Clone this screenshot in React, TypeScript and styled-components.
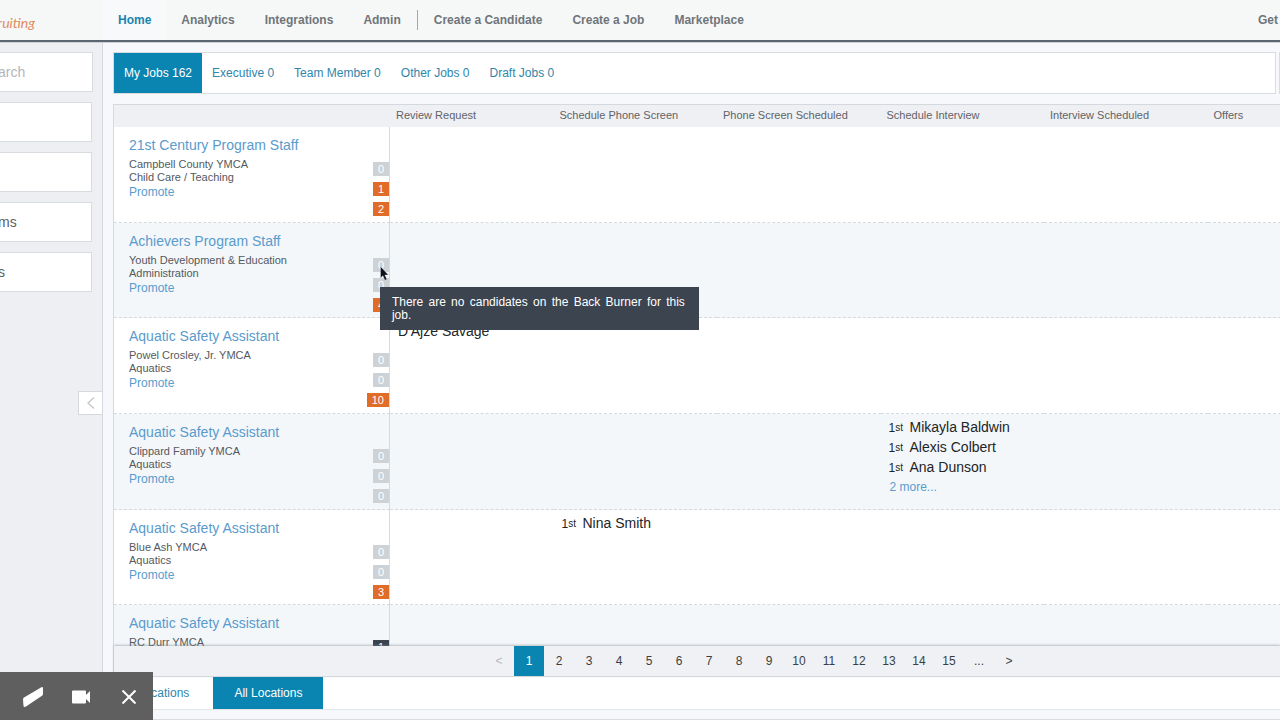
import React from "react";
import styled, { createGlobalStyle, css } from "styled-components";

const GlobalStyle = createGlobalStyle`
  *, *::before, *::after { box-sizing: border-box; }
  body {
    margin: 0;
    overflow: hidden;
    font-family: "Liberation Sans", Arial, sans-serif;
    font-size: 12px;
    color: #55595e;
    background: #f6f8fb;
  }
  a { text-decoration: none; color: inherit; }
  button { font: inherit; border: 0; padding: 0; cursor: pointer; }
`;

const Page = styled.div`
  display: flex;
  flex-direction: column;
  height: 100vh;
`;

const Header = styled.header`
  display: flex;
  flex: none;
  height: 42px;
  background: #f6f8f8;
  border-bottom: 2px solid #5c6670;
  box-shadow: 0 1px 0 #c9d1dc;
  position: relative;
`;

const Logo = styled.a`
  display: flex;
  justify-content: flex-end;
  width: 35px;
  margin-right: 68px;
  padding-top: 13px;
  overflow: hidden;
  font: italic 14px/20px Lato, cursive;
  color: #e08a5b;
`;

const Nav = styled.nav`
  display: flex;
  flex: 1;
  align-items: center;
`;

const NavLink = styled.a<{ $active?: boolean }>`
  display: flex;
  align-items: center;
  height: 40px;
  padding: 0 15px;
  font-weight: bold;
  color: ${(p) => (p.$active ? "#1a84ae" : "#70757a")};
  background: ${(p) => (p.$active ? "#f8f9fa" : "transparent")};
`;

const Divider = styled.span`
  width: 1px;
  height: 20px;
  margin: 0 1px;
  background: #a3a7aa;
`;

const HelpLink = styled.a`
  width: 22px;
  overflow: hidden;
  font-weight: bold;
  line-height: 40px;
  color: #70757a;
`;

const Body = styled.div`
  display: flex;
  flex: 1;
  min-height: 0;
`;

const Sidebar = styled.aside`
  display: flex;
  flex-direction: column;
  flex: none;
  gap: 10px;
  width: 103px;
  padding: 10px 0 0;
  overflow: hidden;
  background: #eeeff3;
  border-right: 1px solid #d3d8de;
`;

const sideBox = css`
  height: 40px;
  margin-right: 10px;
  background: #fff;
  border: 1px solid #d8dbdf;
  border-left: 0;
  font-size: 14px;
  text-indent: -2px;
`;

const SearchInput = styled.input`
  ${sideBox}
  width: 93px;
  flex: none;
  padding: 0;
  font-family: inherit;
  &::placeholder { color: #b4b6b8; opacity: 1; }
`;

const SideLink = styled.a`
  ${sideBox}
  display: flex;
  align-items: center;
  color: #5b5f63;
`;

const Collapse = styled.button`
  display: flex;
  align-items: center;
  justify-content: center;
  align-self: flex-end;
  width: 24px;
  height: 24px;
  margin-top: 89px;
  background: #fff;
  border: 1px solid #d5d8dc;
  border-right: 0;
`;

const Main = styled.main`
  display: flex;
  flex-direction: column;
  flex: 1;
  min-width: 0;
  padding: 10px 0 9px 10px;
  border-bottom: 1px solid #d9dce0;
`;

const TopBar = styled.div`
  display: flex;
  flex: none;
  gap: 3px;
  margin-bottom: 10px;
`;

const TabBar = styled.nav`
  display: flex;
  flex: 1;
  height: 42px;
  background: #fff;
  border: 1px solid #dadddf;
`;

const SideBox = styled.div`
  width: 1px;
  background: #dadddf;
`;

const Tab = styled.a<{ $active?: boolean; $wide?: boolean }>`
  display: flex;
  align-items: center;
  padding: 0 ${(p) => (p.$wide ? 21 : 10)}px;
  color: ${(p) => (p.$active ? "#fff" : "#2f86ab")};
  background: ${(p) => (p.$active ? "#0a84b0" : "transparent")};
`;

const Panel = styled.section`
  display: flex;
  flex-direction: column;
  flex: 1;
  min-height: 0;
  border: 1px solid #d5d9dd;
  border-right: 0;
  border-bottom: 0;
  background: #eff1f4;
`;

const Scroller = styled.div`
  flex: 1;
  min-height: 0;
  overflow: hidden;
`;

const Table = styled.table`
  min-width: 1257px;
  width: 100%;
  table-layout: fixed;
  border-spacing: 0;
`;

const HeadCell = styled.th<{ $first?: boolean }>`
  width: ${(p) => (p.$first ? "276px" : "auto")};
  height: 22px;
  padding: 0 0 2px 6px;
  background: #eff0f4;
  font-size: 11px;
  font-weight: normal;
  line-height: 13px;
  text-align: left;
  color: #5f6368;
`;

const StageCell = styled.td`
  height: 96px;
  padding: 3px 0 0 8px;
  vertical-align: top;
  border-bottom: 1px dashed #d6dadc;
`;

const Row = styled.tr`
  background: #fff;
  &:nth-child(even) { background: #f3f7fa; }
  &:nth-child(3n + 2) > td { height: 95px; }
`;

const JobCell = styled(StageCell)`
  padding: 0;
  border-right: 1px solid #d5dade;
`;

const Job = styled.div`
  display: flex;
  justify-content: space-between;
  padding: 8px 0 0 15px;
`;

const JobInfo = styled.div`
  display: flex;
  flex-direction: column;
  align-items: flex-start;
`;

const JobTitle = styled.a`
  margin-bottom: 3px;
  font-size: 14px;
  line-height: 20px;
  color: #5a9bcd;
`;

const JobDetail = styled.span`
  font-size: 11px;
  line-height: 13px;
`;

const Promote = styled.a`
  line-height: 16px;
  color: #5a9bcd;
`;

const Counts = styled.div`
  display: flex;
  flex-direction: column;
  align-items: flex-end;
  gap: 6px;
  padding-top: 27px;
`;

const CountSlot = styled.div`
  display: flex;
  position: relative;
`;

type Tone = "none" | "hot" | "dark";
const toneColor: Record<Tone, string> = { none: "#ccd2d6", hot: "#e06c28", dark: "#3b434f" };

const Count = styled.button<{ $tone: Tone }>`
  height: 14px;
  padding: 0 5px;
  font-size: 11px;
  line-height: 13px;
  color: #fff;
  background: ${(p) => toneColor[p.$tone]};
`;

const Tooltip = styled.div`
  position: absolute;
  z-index: 2;
  top: 29px;
  left: 7px;
  width: 319px;
  padding: 9px 14px 8px 12px;
  background: #3b444f;
  color: #fff;
  line-height: 13px;
  text-align: justify;
`;

const Pointer = styled.svg`
  position: absolute;
  z-index: 3;
  top: 8px;
  left: 7px;
`;

const Candidate = styled.a`
  display: flex;
  align-items: baseline;
  height: 20px;
  font-size: 14px;
  line-height: 20px;
  color: #222528;
`;

const Rank = styled.span`
  width: 21px;
  font-size: 12px;
  small { font-size: 10px; vertical-align: 1px; line-height: 10px; }
`;

const More = styled.a`
  padding-left: 1px;
  line-height: 20px;
  color: #5a9bcd;
`;

const Pager = styled.nav`
  display: flex;
  flex: none;
  height: 31px;
  padding-left: 370px;
  background: #eff1f4;
  border-bottom: 1px solid #d3d8dd;
  box-shadow: 0 -1px 2px rgba(120, 130, 140, 0.5);
  position: relative;
`;

const PageButton = styled.button<{ $active?: boolean }>`
  width: 30px;
  color: ${(p) => (p.$active ? "#fff" : "#3b3f43")};
  background: ${(p) => (p.$active ? "#0a84b0" : "transparent")};
  &:disabled { color: #b5b9bd; }
`;

const Locations = styled.nav`
  display: flex;
  flex: none;
  gap: 3px;
  height: 33px;
  padding-left: 3px;
  background: #fff;
  border-left: 1px solid #d5d9dd;
  border-bottom: 1px solid #e2e5e9;
`;

const Recorder = styled.div`
  position: fixed;
  z-index: 5;
  left: 0;
  bottom: 0;
  display: flex;
  align-items: center;
  gap: 24px;
  height: 48px;
  padding: 2px 12px 0 21px;
  background: #5f5f5f;
`;

const ToolButton = styled.button`
  display: flex;
  width: 24px;
  height: 24px;
  background: none;
`;

const stages = [
  "Review Request",
  "Schedule Phone Screen",
  "Phone Screen Scheduled",
  "Schedule Interview",
  "Interview Scheduled",
  "Offers",
];

type JobRow = {
  title: string;
  place: string;
  dept: string;
  counts: [number, Tone][];
  tip?: { at: number; text: string };
  stage?: number;
  people?: { rank?: boolean; name: string }[];
  more?: string;
};

const jobs: JobRow[] = [
  {
    title: "21st Century Program Staff",
    place: "Campbell County YMCA",
    dept: "Child Care / Teaching",
    counts: [[0, "none"], [1, "hot"], [2, "hot"]],
  },
  {
    title: "Achievers Program Staff",
    place: "Youth Development & Education",
    dept: "Administration",
    counts: [[0, "none"], [0, "none"], [4, "hot"]],
    tip: { at: 0, text: "There are no candidates on the Back Burner for this job." },
  },
  {
    title: "Aquatic Safety Assistant",
    place: "Powel Crosley, Jr. YMCA",
    dept: "Aquatics",
    counts: [[0, "none"], [0, "none"], [10, "hot"]],
    stage: 0,
    people: [{ name: "D'Ajze Savage" }],
  },
  {
    title: "Aquatic Safety Assistant",
    place: "Clippard Family YMCA",
    dept: "Aquatics",
    counts: [[0, "none"], [0, "none"], [0, "none"]],
    stage: 3,
    people: [
      { rank: true, name: "Mikayla Baldwin" },
      { rank: true, name: "Alexis Colbert" },
      { rank: true, name: "Ana Dunson" },
    ],
    more: "2 more...",
  },
  {
    title: "Aquatic Safety Assistant",
    place: "Blue Ash YMCA",
    dept: "Aquatics",
    counts: [[0, "none"], [0, "none"], [3, "hot"]],
    stage: 1,
    people: [{ rank: true, name: "Nina Smith" }],
  },
  {
    title: "Aquatic Safety Assistant",
    place: "RC Durr YMCA",
    dept: "",
    counts: [[1, "dark"]],
  },
];

const pages = Array.from({ length: 15 }, (_, i) => String(i + 1));

function JobTableRow({ job }: { job: JobRow }) {
  return (
    <Row>
      <JobCell>
        <Job>
          <JobInfo>
            <JobTitle href="#">{job.title}</JobTitle>
            <JobDetail>{job.place}</JobDetail>
            {job.dept && <JobDetail>{job.dept}</JobDetail>}
            {job.dept && <Promote href="#">Promote</Promote>}
          </JobInfo>
          <Counts>
            {job.counts.map(([n, tone], i) => (
              <CountSlot key={i}>
                <Count $tone={tone}>{n}</Count>
                {job.tip?.at === i && (
                  <>
                    <Pointer width="10" height="15" viewBox="0 0 10 15" aria-hidden="true">
                      <path d="M.5 .5V12l2.4-2.2 2 4.4 2-.9-2-4.3h3.5z" fill="#0c0f1c" stroke="#e8ecf0" strokeWidth=".4" />
                    </Pointer>
                    <Tooltip role="tooltip">{job.tip.text}</Tooltip>
                  </>
                )}
              </CountSlot>
            ))}
          </Counts>
        </Job>
      </JobCell>
      {stages.map((s, i) => (
        <StageCell key={s}>
          {job.stage === i && (
            <>
              {job.people?.map((p) => (
                <Candidate key={p.name} href="#">
                  {p.rank && <Rank>1<small>st</small></Rank>}
                  {p.name}
                </Candidate>
              ))}
              {job.more && <More href="#">{job.more}</More>}
            </>
          )}
        </StageCell>
      ))}
    </Row>
  );
}

export default function App() {
  return (
    <Page>
      <GlobalStyle />
      <Header>
        <Logo href="#">ruiting</Logo>
        <Nav>
          <NavLink href="#" $active>Home</NavLink>
          <NavLink href="#">Analytics</NavLink>
          <NavLink href="#">Integrations</NavLink>
          <NavLink href="#">Admin</NavLink>
          <Divider />
          <NavLink href="#">Create a Candidate</NavLink>
          <NavLink href="#">Create a Job</NavLink>
          <NavLink href="#">Marketplace</NavLink>
        </Nav>
        <HelpLink href="#">Get</HelpLink>
      </Header>
      <Body>
        <Sidebar>
          <SearchInput aria-label="Search" placeholder="arch" />
          <SideLink href="#" aria-label="Menu item" />
          <SideLink href="#" aria-label="Menu item" />
          <SideLink href="#">ms</SideLink>
          <SideLink href="#">s</SideLink>
          <Collapse aria-label="Collapse sidebar">
            <svg width="10" height="14" viewBox="0 0 10 14" fill="none" stroke="#c3c7ca" strokeWidth="1.3">
              <path d="M8 1.5L2 7l6 5.500" />
            </svg>
          </Collapse>
        </Sidebar>
        <Main>
          <TopBar>
            <TabBar>
              <Tab href="#" $active>My Jobs 162</Tab>
              <Tab href="#">Executive 0</Tab>
              <Tab href="#">Team Member 0</Tab>
              <Tab href="#">Other Jobs 0</Tab>
              <Tab href="#">Draft Jobs 0</Tab>
            </TabBar>
            <SideBox />
          </TopBar>
          <Panel>
            <Scroller>
              <Table>
                <thead>
                  <tr>
                    <HeadCell $first aria-label="Job" />
                    {stages.map((s) => (
                      <HeadCell key={s}>{s}</HeadCell>
                    ))}
                  </tr>
                </thead>
                <tbody>
                  {jobs.map((job, i) => (
                    <JobTableRow key={i} job={job} />
                  ))}
                </tbody>
              </Table>
            </Scroller>
            <Pager aria-label="Pages">
              <PageButton disabled>&lt;</PageButton>
              {pages.map((p) => (
                <PageButton key={p} $active={p === "1"}>{p}</PageButton>
              ))}
              <PageButton>...</PageButton>
              <PageButton>&gt;</PageButton>
            </Pager>
          </Panel>
          <Locations>
            <Tab href="#" $wide>Locations</Tab>
            <Tab href="#" $wide $active>All Locations</Tab>
          </Locations>
        </Main>
      </Body>
      <Recorder>
        <ToolButton aria-label="Erase">
          <svg width="24" height="24" viewBox="0 0 24 24" fill="#fff">
            <path d="M3 12.500L20 2.500q2-1 2 .6V9q0 1-1 1.800L5 21.500q-2 1.200-2.500-.5L2 14.500q0-1.300 1-2z" />
          </svg>
        </ToolButton>
        <ToolButton aria-label="Camera">
          <svg width="24" height="24" viewBox="0 0 24 24" fill="#fff">
            <path d="M4 5.500h12a1 1 0 0 1 1 1V10l4-4v12l-4-4v3.500a1 1 0 0 1-1 1H4a1 1 0 0 1-1-1v-11a1 1 0 0 1 1-1z" />
          </svg>
        </ToolButton>
        <ToolButton aria-label="Close">
          <svg width="24" height="24" viewBox="0 0 24 24" fill="none" stroke="#fff" strokeWidth="2">
            <path d="M5.500 5.500l13 13M18.500 5.500l-13 13" />
          </svg>
        </ToolButton>
      </Recorder>
    </Page>
  );
}
